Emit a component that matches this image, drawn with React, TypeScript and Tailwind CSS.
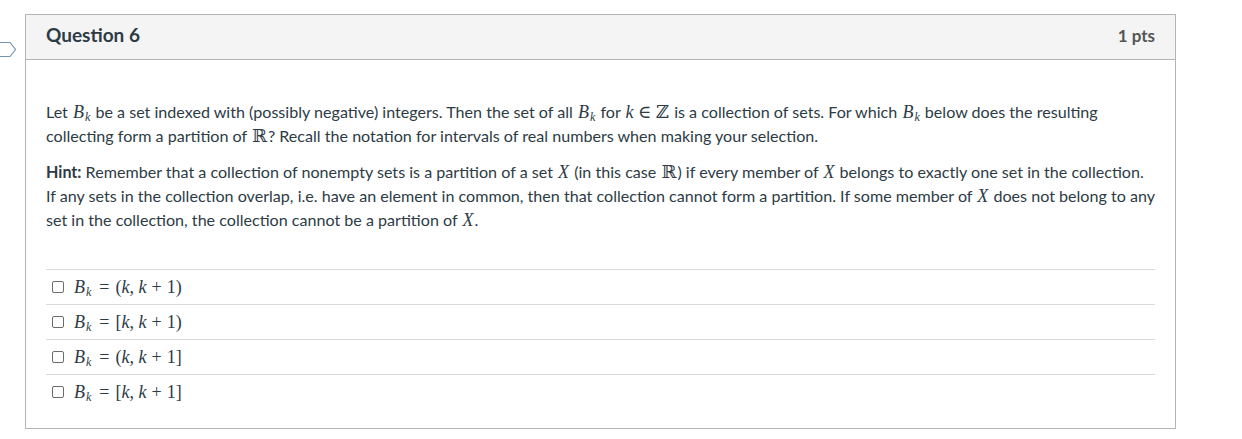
import React from 'react'

function M({ children }: { children: React.ReactNode }) {
  return <span className="mx-[1px] font-['Liberation_Serif','DejaVu_Serif',serif] text-[18px] leading-none">{children}</span>
}

function Bk() {
  return (
    <M>
      <i>B</i>
      <i className="relative top-[3px] ml-[1px] text-[12px] leading-none">k</i>
    </M>
  )
}

const options = [
  ['(', ')'],
  ['[', ')'],
  ['(', ']'],
  ['[', ']'],
]

export default function App() {
  return (
    <div className="relative h-[439px] w-[1242px] bg-white font-['Lato','Liberation_Sans',sans-serif] text-[#2d3b45]">
      <svg className="absolute left-0 top-[27px]" width="17" height="17" viewBox="0 0 17 17">
        <path d="M-2 1.5 H10 L15.5 8.5 L10 15.5 H-2" fill="none" stroke="#7494b3" strokeWidth="1.2" />
      </svg>
      <div className="ml-[25px] mt-[14px] w-[1151px] border border-[#b4b4b4]">
        <div className="flex h-[45px] items-center justify-between border-b border-[#b4b4b4] bg-[#f4f4f4] px-[20px] pb-[3px]">
          <h2 className="text-[19px] font-bold">Question 6</h2>
          <span className="text-[17px] font-bold text-[#555]">1 pts</span>
        </div>
        <div className="px-[20px] pb-[19px] pt-[40px] text-[16.1px] leading-[24px]">
          <p>
            Let <Bk /> be a set indexed with (possibly negative) integers. Then the set of all <Bk /> for{' '}
            <M>
              <i>k</i> ∈ ℤ
            </M>{' '}
            is a collection of sets. For which <Bk /> below does the resulting collecting form a partition of <M>ℝ</M>?
            Recall the notation for intervals of real numbers when making your selection.
          </p>
          <p className="mt-[12px]">
            <span className="font-bold">Hint:</span> Remember that a collection of nonempty sets is a partition of a set{' '}
            <M>
              <i>X</i>
            </M>{' '}
            (in this case <M>ℝ</M>) if every member of{' '}
            <M>
              <i>X</i>
            </M>{' '}
            belongs to exactly one set in the collection. If any sets in the collection overlap, i.e. have an element in
            common, then that collection cannot form a partition. If some member of{' '}
            <M>
              <i>X</i>
            </M>{' '}
            does not belong to any set in the collection, the collection cannot be a partition of{' '}
            <M>
              <i>X</i>
            </M>
            .
          </p>
          <div className="mt-[37px]">
            {options.map(([l, r], i) => (
              <div key={i} className="flex h-[35px] items-center gap-[9px] border-t border-[#dadada] pl-[6px]">
                <span className="h-[12px] w-[12px] rounded-[2px] border border-[#6b6b6b]" />
                <span className="flex items-center">
                  <Bk />
                  <M>
                    <span className="mx-[6px]">=</span>
                    {l}
                    <i>k</i>, <i>k</i>
                    <span className="mx-[5px]">+</span>1{r}
                  </M>
                </span>
              </div>
            ))}
          </div>
        </div>
      </div>
    </div>
  )
}
